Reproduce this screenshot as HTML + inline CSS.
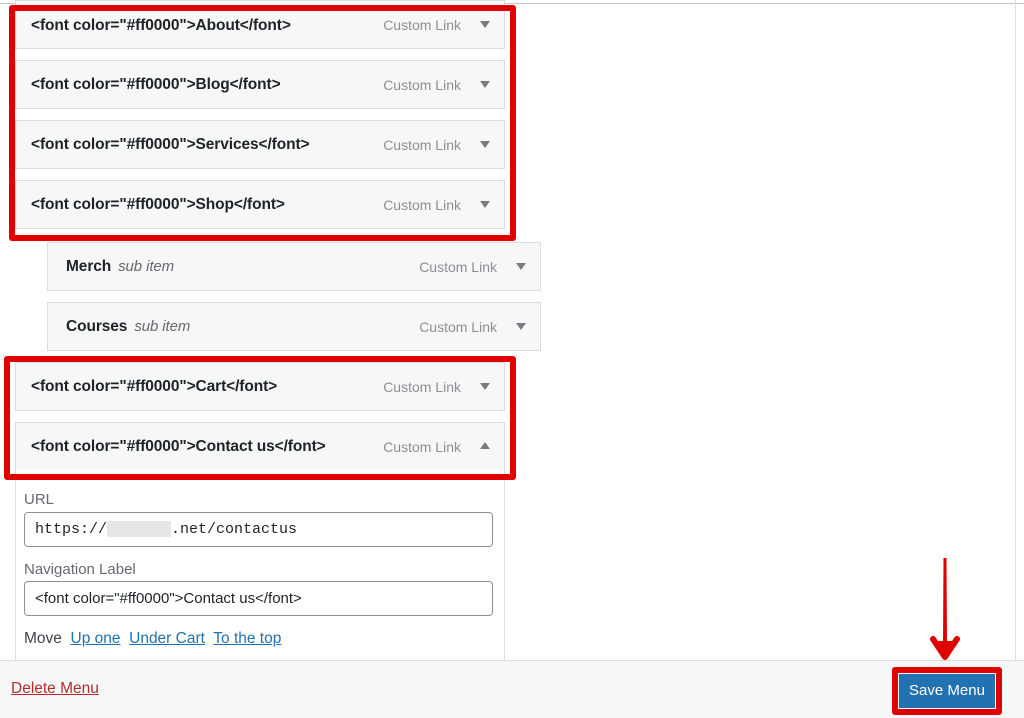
<!DOCTYPE html>
<html><head><style>
*{margin:0;padding:0;box-sizing:border-box}
body{width:1024px;height:718px;background:#fff;position:relative;overflow:hidden;font-family:"Liberation Sans",sans-serif;font-size:14px;color:#1d2327}
.a{position:absolute}
.it{position:absolute;background:#f6f7f7;border:1px solid #dcdcde;height:49px}
.it b{position:absolute;left:15px;top:15px;font-weight:bold;font-size:15.5px;color:#1d2327;letter-spacing:-0.1px}
.it i{font-weight:normal;color:#646970;margin-left:7px;font-size:15px}
.it .cl{position:absolute;right:43px;top:16px;color:#8c8f94;font-size:14px}
.it .ar{position:absolute;right:14px;top:20px;width:0;height:0;border-left:5px solid transparent;border-right:5px solid transparent;border-top:7px solid #787c82}
.it .up{border-top:0;border-bottom:7px solid #787c82;top:19px}
.rb{position:absolute;border:6px solid #e00000;border-radius:3px}
.inp{position:absolute;border:1px solid #8c8f94;border-radius:4px;background:#fff;height:35px;left:24px;width:469px;padding:8px 10px;font-size:15px}
a{color:#2271b1;text-decoration:underline}
</style></head><body>
<div class="a" style="left:0;top:3px;width:1024px;height:1px;background:#c3c4c7"></div>
<div class="a" style="left:1015px;top:0;width:1px;height:660px;background:#dcdcde"></div>

<div class="it" style="left:15px;top:0;width:490px;height:49px"><b style="top:16px">&lt;font color="#ff0000"&gt;About&lt;/font&gt;</b><span class="cl" style="top:16px">Custom Link</span><span class="ar" style="top:20px"></span></div>
<div class="it" style="left:15px;top:60px;width:490px"><b>&lt;font color="#ff0000"&gt;Blog&lt;/font&gt;</b><span class="cl">Custom Link</span><span class="ar"></span></div>
<div class="it" style="left:15px;top:120px;width:490px"><b>&lt;font color="#ff0000"&gt;Services&lt;/font&gt;</b><span class="cl">Custom Link</span><span class="ar"></span></div>
<div class="it" style="left:15px;top:180px;width:490px"><b>&lt;font color="#ff0000"&gt;Shop&lt;/font&gt;</b><span class="cl">Custom Link</span><span class="ar"></span></div>
<div class="it" style="left:47px;top:242px;width:494px"><b style="left:18px">Merch<i>sub item</i></b><span class="cl">Custom Link</span><span class="ar"></span></div>
<div class="it" style="left:47px;top:302px;width:494px"><b style="left:18px">Courses<i>sub item</i></b><span class="cl">Custom Link</span><span class="ar"></span></div>
<div class="it" style="left:15px;top:362px;width:490px"><b>&lt;font color="#ff0000"&gt;Cart&lt;/font&gt;</b><span class="cl">Custom Link</span><span class="ar"></span></div>
<div class="it" style="left:15px;top:422px;width:490px"><b>&lt;font color="#ff0000"&gt;Contact us&lt;/font&gt;</b><span class="cl">Custom Link</span><span class="ar up"></span></div>

<div class="a" style="left:15px;top:470px;width:490px;height:191px;border:1px solid #dcdcde;border-top:0;background:#fff"></div>
<div class="a" style="left:24px;top:491px;color:#646970;font-size:15px">URL</div>
<div class="inp" style="top:512px;font-family:'Liberation Mono',monospace;font-size:15px">https://<span style="display:inline-block;width:64px;height:16px;background:#e6e6e6;vertical-align:middle"></span>.net/contactus</div>
<div class="a" style="left:24px;top:561px;color:#646970;font-size:15px">Navigation Label</div>
<div class="inp" style="top:581px">&lt;font color="#ff0000"&gt;Contact us&lt;/font&gt;</div>
<div class="a" style="left:24px;top:630px;font-size:15.5px;color:#3c434a">Move&nbsp; <a>Up one</a>&nbsp; <a>Under Cart</a>&nbsp; <a>To the top</a></div>

<div class="a" style="left:0;top:660px;width:1024px;height:58px;background:#f6f7f7;border-top:1px solid #dcdcde"></div>
<div class="a" style="left:11px;top:680px;font-size:15.5px"><a style="color:#b32d2e">Delete Menu</a></div>

<div class="rb" style="left:9px;top:5px;width:507px;height:236px"></div>
<div class="rb" style="left:4px;top:356px;width:512px;height:124px"></div>

<div class="a" style="left:899px;top:674px;width:96px;height:34px;background:#2271b1;color:#fff;font-size:15px;text-align:center;line-height:34px">Save Menu</div>
<div class="rb" style="left:892px;top:667px;width:110px;height:48px"></div>

<svg class="a" style="left:925px;top:555px" width="40" height="110"><path d="M18.5 3 L21.5 3 L22 90 L18 90 Z" fill="#e00000"/><path d="M8 84 L20 102 L32 84" stroke="#e00000" stroke-width="6" fill="none" stroke-linejoin="round" stroke-linecap="round"/><path d="M12 86 L20 99 L28 86 Z" fill="#e00000"/></svg>
</body></html>
